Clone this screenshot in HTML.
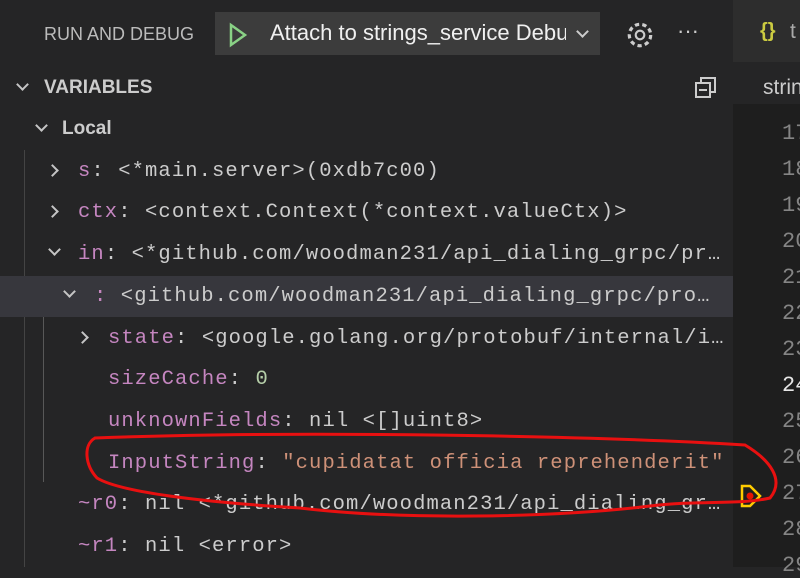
<!DOCTYPE html>
<html><head><style>
*{margin:0;padding:0;box-sizing:border-box}
body{width:800px;height:567px;overflow:hidden;background:#252526;position:relative;font-family:"Liberation Sans",sans-serif;color:#ccc}
.abs{position:absolute}
.mono{font-family:"Liberation Mono",monospace;font-size:20.5px;letter-spacing:1.1px;white-space:nowrap;color:#ccc}
.row{position:absolute;left:0;width:733px;height:41px;line-height:41px}
.k{color:#c586c0}.s{color:#ce9178}.n{color:#b5cea8}
.chev{position:absolute;width:9px;height:9px;border-right:2px solid #c5c5c5;border-bottom:2px solid #c5c5c5}
.down{transform:rotate(45deg)}
.right{transform:rotate(-45deg)}
.ln{position:absolute;left:782px;font-family:"Liberation Mono",monospace;font-size:22px;color:#858585;line-height:24px}
</style></head><body>
<div class="abs" style="left:733px;top:0;width:67px;height:62px;background:#2d2d2d"></div>
<div class="abs" style="left:760px;top:20px;font-size:20px;color:#cbcb41;font-weight:bold">{}</div>
<div class="abs" style="left:790px;top:20px;font-size:21px;color:#aaa">t</div>
<div class="abs" style="left:733px;top:62px;width:67px;height:42px;background:#252526"></div>
<div class="abs" style="left:763px;top:76px;font-size:21px;color:#ccc">strings</div>
<div class="abs" style="left:733px;top:104px;width:67px;height:463px;background:#1e1e1e"></div>
<div class="ln" style="top:122px">17</div><div class="ln" style="top:158px">18</div><div class="ln" style="top:194px">19</div><div class="ln" style="top:230px">20</div><div class="ln" style="top:266px">21</div><div class="ln" style="top:302px">22</div><div class="ln" style="top:338px">23</div><div class="ln" style="top:374px;color:#e6e6e6">24</div><div class="ln" style="top:410px">25</div><div class="ln" style="top:446px">26</div><div class="ln" style="top:482px">27</div><div class="ln" style="top:518px">28</div><div class="ln" style="top:554px">29</div>
<div class="abs" style="left:44px;top:24px;font-size:18px;color:#bbb">RUN AND DEBUG</div>
<div class="abs" style="left:215px;top:12px;width:385px;height:43px;background:#3c3c3c"></div>
<svg class="abs" style="left:228px;top:22px" width="20" height="26"><path d="M3 3 L17 13 L3 23 Z" fill="none" stroke="#89d185" stroke-width="2.5"/></svg>
<div class="abs" style="left:270px;top:20px;font-size:22px;color:#f0f0f0;width:296px;overflow:hidden;white-space:nowrap">Attach to strings_service Debug</div>
<div class="chev down" style="left:578px;top:27px;border-color:#ccc"></div>
<svg class="abs" style="left:625px;top:20px" width="30" height="30" viewBox="0 0 28 28"><circle cx="14" cy="14" r="4" fill="none" stroke="#ccc" stroke-width="2"/><circle cx="14" cy="14" r="10" fill="none" stroke="#ccc" stroke-width="3" stroke-dasharray="4 3"/></svg>
<div class="abs" style="left:677px;top:18px;font-size:22px;color:#ccc">···</div>
<div class="chev down" style="left:18px;top:80px"></div>
<div class="abs" style="left:44px;top:77px;font-size:19px;font-weight:bold;color:#ccc">VARIABLES</div>
<svg class="abs" style="left:694px;top:76px" width="24" height="24"><rect x="7" y="2" width="14" height="14" fill="none" stroke="#ccc" stroke-width="2"/><rect x="2" y="7" width="14" height="14" fill="#252526" stroke="#ccc" stroke-width="2"/><path d="M5 14 H13" stroke="#ccc" stroke-width="2"/></svg>
<div class="chev down" style="left:37px;top:121px"></div>
<div class="abs" style="left:62px;top:118px;font-size:19px;font-weight:bold;color:#ccc">Local</div>
<div class="abs" style="left:24px;top:150px;width:1px;height:417px;background:#444"></div>
<div class="row" style="top:276px;background:#37373d"></div>
<div class="abs" style="left:43px;top:317px;width:1px;height:165px;background:#585858"></div>
<div class="chev right" style="left:48px;top:166px"></div>
<div class="row mono" style="top:151px;left:78px"><span class="k">s</span>: &lt;*main.server&gt;(0xdb7c00)</div>
<div class="chev right" style="left:48px;top:207px"></div>
<div class="row mono" style="top:192px;left:78px"><span class="k">ctx</span>: &lt;context.Context(*context.valueCtx)&gt;</div>
<div class="chev down" style="left:50px;top:245px"></div>
<div class="row mono" style="top:234px;left:78px"><span class="k">in</span>: &lt;*github.com/woodman231/api_dialing_grpc/pr…</div>
<div class="chev down" style="left:65px;top:287px"></div>
<div class="row mono" style="top:276px;left:94px;width:640px"><span class="k">:</span> &lt;github.com/woodman231/api_dialing_grpc/pro…</div>
<div class="chev right" style="left:78px;top:333px"></div>
<div class="row mono" style="top:318px;left:108px"><span class="k">state</span>: &lt;google.golang.org/protobuf/internal/i…</div>
<div class="row mono" style="top:359px;left:108px"><span class="k">sizeCache</span>: <span class="n">0</span></div>
<div class="row mono" style="top:401px;left:108px"><span class="k">unknownFields</span>: nil &lt;[]uint8&gt;</div>
<div class="row mono" style="top:443px;left:108px"><span class="k">InputString</span>: <span class="s">"cupidatat officia reprehenderit"</span></div>
<div class="row mono" style="top:484px;left:78px"><span class="k">~r0</span>: nil &lt;*github.com/woodman231/api_dialing_gr…</div>
<div class="row mono" style="top:526px;left:78px"><span class="k">~r1</span>: nil &lt;error&gt;</div>
<svg class="abs" style="left:740px;top:483px" width="24" height="26"><path d="M2 3 H10 L20 13 L10 23 H2 Z" fill="none" stroke="#ffcc00" stroke-width="2.5"/><circle cx="10" cy="13" r="3.5" fill="#e51400"/></svg>
<svg class="abs" style="left:0;top:0" width="800" height="567"><path d="M95 438 C300 430 600 436 745 445 C770 460 785 480 770 498 C740 505 700 500 650 506 C550 518 400 520 300 508 C200 502 120 492 97 478 C85 465 83 445 95 438 Z" fill="none" stroke="#e81010" stroke-width="3"/></svg>
</body></html>
